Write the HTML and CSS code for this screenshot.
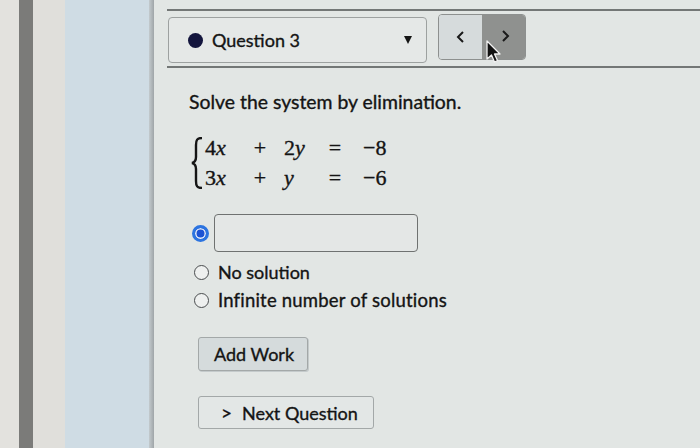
FILE: index.html
```html
<!DOCTYPE html>
<html>
<head>
<meta charset="utf-8">
<link rel="stylesheet" href="styles.css">
</head>
<body>
<div class="app">
  <div class="rail r1"></div>
  <div class="rail r2"></div>
  <div class="rail r3"></div>
  <div class="rail r4"></div>
  <div class="rail r5"></div>
  <div class="main">
    <div class="header">
      <div class="qselect">
        <span class="dot"></span>
        <span class="qlabel">Question 3</span>
        <span class="caret"></span>
      </div>
      <div class="nav">
        <div class="navbtn prev">
          <svg width="10" height="14" viewBox="0 0 10 14"><polyline points="7,2 2,7 7,12" fill="none" stroke="#1a1a1a" stroke-width="2"/></svg>
        </div>
        <div class="navbtn next">
          <svg width="10" height="14" viewBox="0 0 10 14"><polyline points="3,2 8,7 3,12" fill="none" stroke="#1a1a1a" stroke-width="2"/></svg>
        </div>
        <svg class="cursor" width="16" height="24" viewBox="0 0 16 24"><path d="M1 1 L1 19 L5.5 15 L8.5 22 L11.5 20.5 L8.5 14 L14 14 Z" fill="#111" stroke="#f2f2f2" stroke-width="1.3" stroke-linejoin="round"/></svg>
      </div>
    </div>
    <div class="content">
      <p class="prompt">Solve the system by elimination.</p>
      <div class="system">
        <svg class="brace" width="12" height="52" viewBox="0 0 12 52"><path d="M11 1 C6 1 5 3 5 8 L5 20 C5 24 3 25.5 1 26 C3 26.5 5 28 5 32 L5 44 C5 49 6 51 11 51" fill="none" stroke="#151515" stroke-width="2.4"/></svg>
        <div class="eqgrid">
          <span class="c1"><span class="n">4</span><i>x</i></span><span class="c2">+</span><span class="c3"><span class="n">2</span><i>y</i></span><span class="c4">=</span><span class="c5">−8</span>
          <span class="c1"><span class="n">3</span><i>x</i></span><span class="c2">+</span><span class="c3"><i>y</i></span><span class="c4">=</span><span class="c5">−6</span>
        </div>
      </div>
      <div class="opt first">
        <span class="radio on"></span>
        <span class="answer"></span>
      </div>
      <div class="opt">
        <span class="radio"></span>
        <span class="otext">No solution</span>
      </div>
      <div class="opt">
        <span class="radio"></span>
        <span class="otext wide">Infinite number of solutions</span>
      </div>
      <div class="btn addwork">Add Work</div>
      <div class="btn nextq"><span class="chev">&gt;</span>Next Question</div>
    </div>
  </div>
</div>
</body>
</html>
```

FILE: styles.css
```css
html, body {
  margin: 0;
  padding: 0;
}
body {
  width: 700px;
  height: 448px;
  overflow: hidden;
  font-family: Lato, "Open Sans", sans-serif;
  color: #141414;
  background: #e2e6e4;
  -webkit-text-stroke: 0.35px #141414;
}
.app {
  display: flex;
  height: 448px;
}
.rail { flex: none; height: 100%; }
.r1 { width: 19px; background: #e3e2de; }
.r2 { width: 14px; background: #7b7b79; }
.r3 { width: 32px; background: #e0dfdb; }
.r4 { width: 84px; background: #cfdce4; }
.r5 { width: 5px; background: linear-gradient(to right, #c3cacd, #9fa5a8); }
.main {
  flex: 1;
  background: #e2e6e4;
}
.header {
  margin: 9px 0 0 13px;
  border-top: 2px solid #737776;
  border-bottom: 2px solid #737776;
  padding: 3px 0 3px 1px;
  display: flex;
  align-items: center;
  gap: 11px;
}
.qselect {
  box-sizing: border-box;
  width: 259px;
  height: 46px;
  border: 1px solid #9da1a0;
  border-radius: 4px;
  background: #e5e8e7;
  display: flex;
  align-items: center;
  padding-left: 19px;
  margin-top: 3px;
}
.dot {
  width: 15px;
  height: 15px;
  border-radius: 50%;
  background: #13153d;
  flex: none;
}
.qlabel {
  margin-left: 9px;
  font-size: 18px;
  flex: 1;
}
.caret {
  width: 0;
  height: 0;
  border-left: 4.5px solid transparent;
  border-right: 4.5px solid transparent;
  border-top: 8px solid #151515;
  margin-right: 14px;
}
.nav {
  position: relative;
  box-sizing: border-box;
  display: flex;
  width: 88px;
  height: 46px;
  margin-top: -3px;
  border: 1px solid #8d908f;
  border-radius: 4px;
}
.navbtn {
  display: flex;
  align-items: center;
  justify-content: center;
}
.prev { width: 43px; background: #d6dbdc; border-radius: 3px 0 0 3px; padding-left: 1px; box-sizing: border-box; }
.next { width: 43px; background: #8f918f; border-radius: 0 3px 3px 0; padding-left: 2px; padding-bottom: 3px; box-sizing: border-box; }
.cursor {
  position: absolute;
  left: 47px;
  top: 25px;
}
.content {
  padding-left: 35px;
}
.prompt {
  margin: 22px 0 0 0;
  font-size: 19.4px;
  line-height: 24px;
}
.system {
  display: flex;
  align-items: center;
  margin-top: 19px;
  margin-left: 2px;
}
.brace { flex: none; }
.eqgrid {
  display: grid;
  grid-template-columns: 36px 38px 40px 32px 40px;
  grid-auto-rows: 30px;
  align-items: center;
  font-family: "Liberation Serif", "DejaVu Serif", serif;
  font-size: 22px;
  margin-left: 2px;
}
.eqgrid i { font-style: italic; }
.c2, .c4 { text-align: center; }
.c3 { padding-left: 5px; }
.c5 { padding-left: 12px; }
.opt {
  display: flex;
  align-items: center;
  height: 28px;
  font-size: 18px;
}
.opt.first {
  height: 38px;
  margin-top: 21px;
  margin-bottom: 6px;
}
.otext.wide { letter-spacing: 0.2px; font-size: 18.5px; }
.radio {
  flex: none;
  width: 13px;
  height: 13px;
  border: 1.5px solid #4a4d4f;
  border-radius: 50%;
  background: #eef0ef;
  margin-left: 5px;
  margin-right: 9px;
}
.radio.on {
  width: 11px;
  height: 11px;
  border: 3px solid #2c74e0;
  background: #1c52d3;
  box-shadow: inset 0 0 0 1.5px #e8eef8;
  margin-left: 3px;
  margin-right: 5px;
}
.answer {
  width: 202px;
  height: 36px;
  border: 1.5px solid #6f7271;
  border-radius: 4px;
  background: #e4e7e6;
}
.btn {
  display: inline-flex;
  align-items: center;
  box-sizing: border-box;
  height: 34px;
  font-size: 18px;
  border: 1px solid #a3a8a8;
  border-radius: 3px;
  margin-left: 9px;
}
.addwork {
  width: 110px;
  padding-left: 15px;
  margin-top: 23px;
  background: #d5dbdc;
  box-shadow: 1px 1px 0 #c4cacb;
}
.nextq {
  display: flex;
  width: 176px;
  height: 33px;
  padding-left: 22px;
  margin-top: 25px;
  background: #e3e7e6;
}
.chev {
  margin-right: 10px;
  font-size: 19px;
}
```
